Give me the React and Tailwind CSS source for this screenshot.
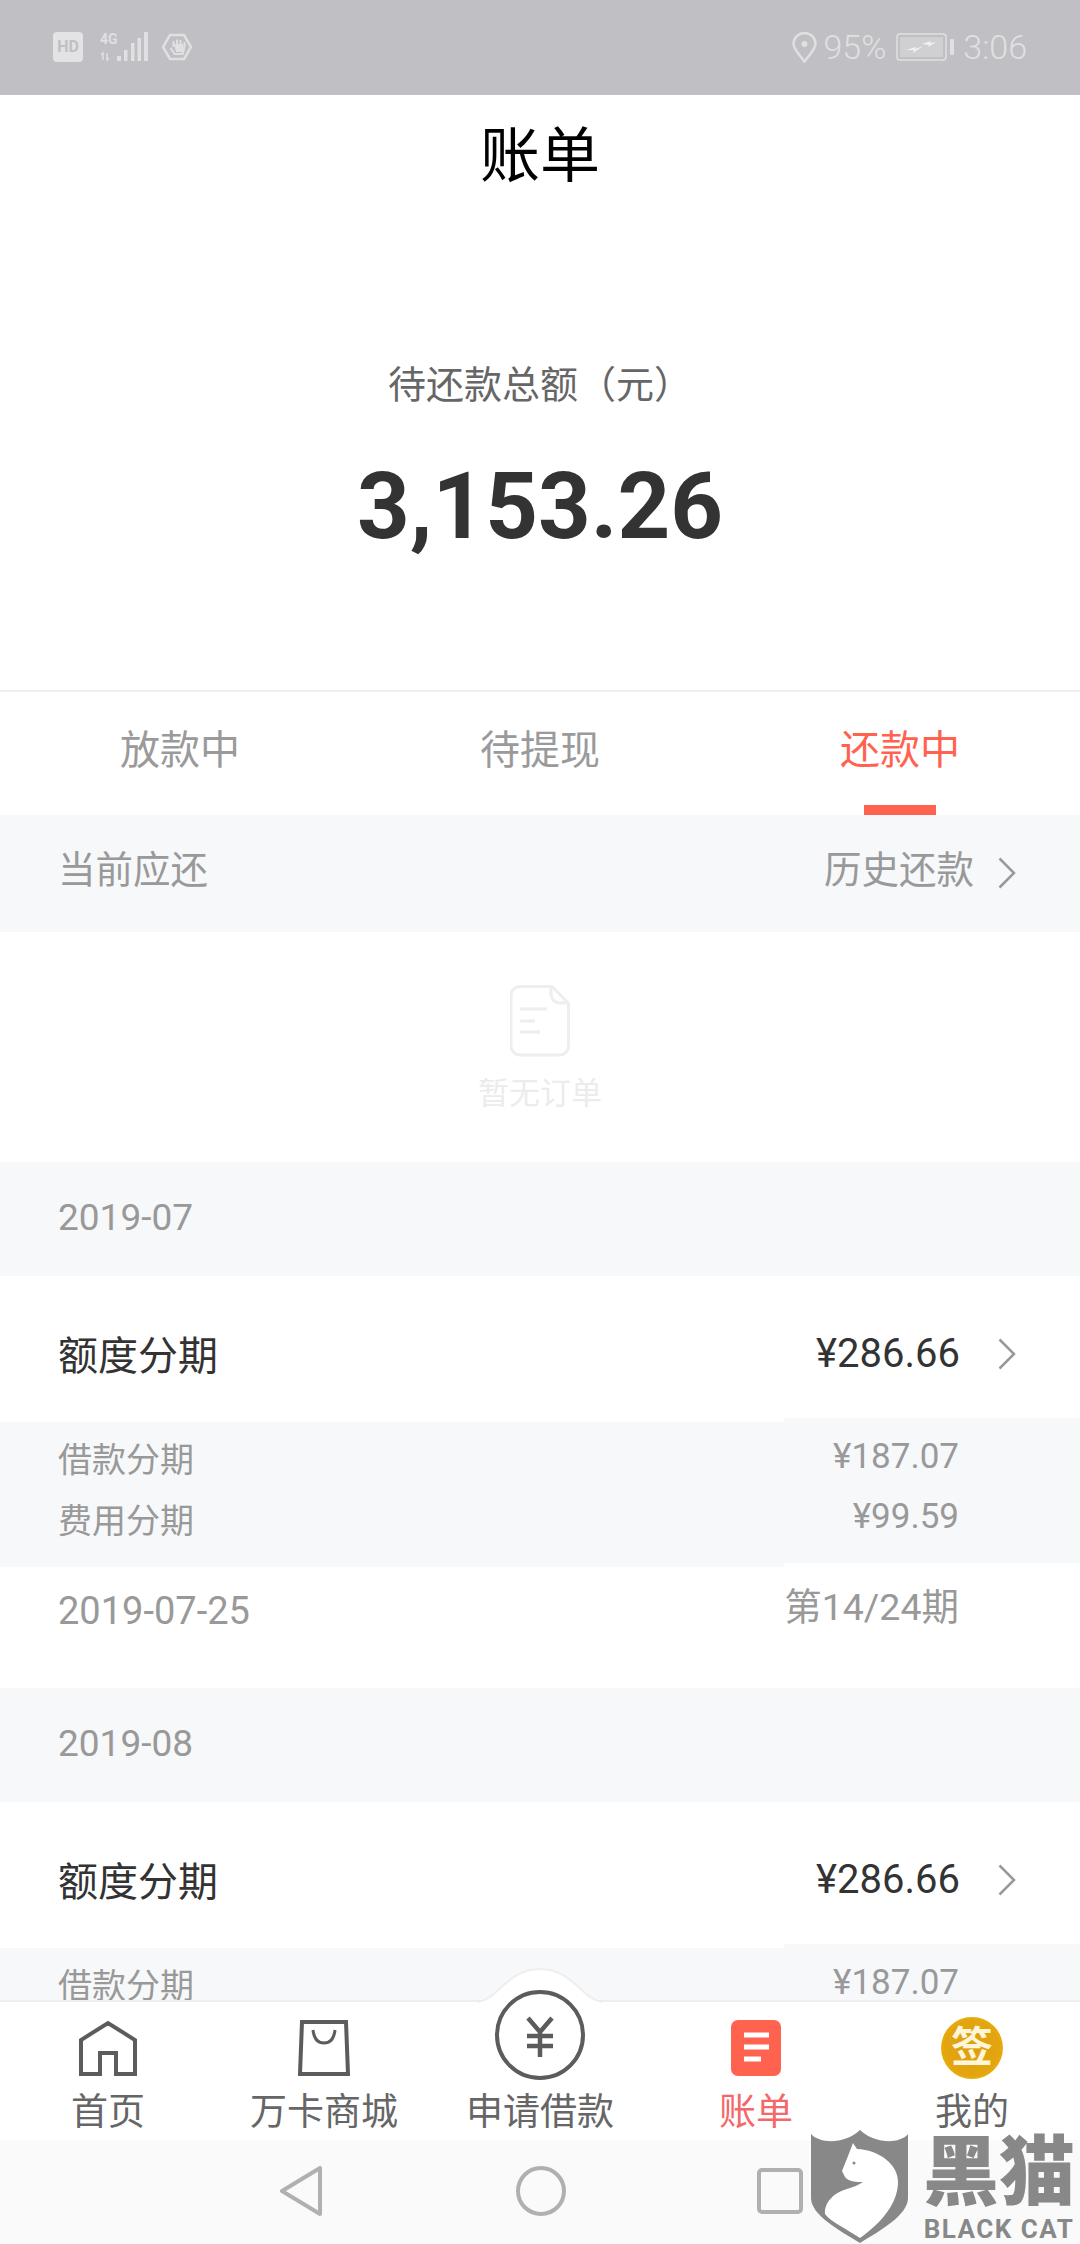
function Chevron({ className }) {
  return (
    <svg className={className} width="18" height="32" viewBox="0 0 18 32" fill="none" stroke="#999999" strokeWidth="2.5">
      <path d="M1.500 1.500L16 16 1.500 30.500" />
    </svg>
  );
}

function StatusBar() {
  return (
    <div className="relative z-20 flex h-[95px] shrink-0 items-center justify-between bg-[#c0bfc3] pl-[53px] pr-[53px] pb-[1px] text-[#e0e0e2]">
      <div className="flex items-center">
        <div className="flex h-[30px] w-[30px] items-center justify-center rounded-[4px] bg-[#e3e3e5] text-[16px] font-bold text-[#c0bfc3]">HD</div>
        {/* 신호 */}
        <svg className="ml-[17px]" width="50" height="30" viewBox="0 0 50 30" fill="currentColor">
          <text x="0" y="12" fontSize="14" fontWeight="700" fontFamily="Roboto">4G</text>
          <path d="M3 28v-7l-2 2M7 21v7l2-2" stroke="currentColor" strokeWidth="1.500" fill="none" />
          <rect x="17" y="24" width="4" height="5" />
          <rect x="24" y="18" width="3.500" height="11" />
          <rect x="31" y="11" width="3.500" height="18" />
          <rect x="37.500" y="6" width="3.500" height="23" />
          <rect x="44" y="0" width="4" height="29" />
        </svg>
        <svg className="ml-[11px]" width="32" height="28" viewBox="0 0 32 28" fill="none" stroke="currentColor" strokeWidth="2.500">
          <path d="M9 2h14l7 12-7 12H9L2 14z" />
          <path d="M9.500 15l4 6h8c1.500-3 2-7 2-12v4M12.500 14V8M16 14V6.500M19.500 14V7" strokeWidth="2" />
          <path d="M13 11h9v8h-7z" fill="currentColor" stroke="none" />
        </svg>
      </div>
      <div className="flex items-center">
        <svg width="25" height="31" viewBox="0 0 25 31" fill="none" stroke="currentColor" strokeWidth="2.500">
          <path d="M12.500 29.500C7 22 1.500 17 1.500 12a11 11 0 0 1 22 0c0 5-5.500 10-11 17.500z" />
          <circle cx="12.500" cy="12" r="3" fill="currentColor" stroke="none" />
        </svg>
        <span className="ml-[6px] text-[34px] leading-none font-light">95%</span>
        <svg className="ml-[10px]" width="58" height="28" viewBox="0 0 58 28" fill="none">
          <rect x="1" y="1" width="49" height="26" rx="3" stroke="currentColor" strokeWidth="1.500" />
          <rect x="4" y="4" width="43" height="20" fill="currentColor" opacity="0.5" />
          <path d="M10 17l10-3-1 2 8-3-10 7 1-3zM26 11l9-3-1 2 6-1-8 5 1-2z" fill="#f2f2f3" />
          <rect x="54" y="6" width="4" height="16" rx="1" fill="currentColor" />
        </svg>
        <span className="ml-[9px] text-[34px] leading-none font-light">3:06</span>
      </div>
    </div>
  );
}

function Tabs() {
  const tabs = ['放款中', '待提现', '还款中'];
  return (
    <div className="grid h-[125px] shrink-0 grid-cols-3 border-t-2 border-[#eeeeef] bg-white">
      {tabs.map((t, i) => (
        <div key={t} className="relative flex items-center justify-center pb-[6px]">
          <span className={i === 2 ? 'text-[40px] text-[#ff6350]' : 'text-[40px] text-[#9a9a9a]'}>{t}</span>
          {i === 2 && <div className="absolute bottom-0 left-1/2 h-[10px] w-[72px] -translate-x-1/2 bg-[#ff6350]" />}
        </div>
      ))}
    </div>
  );
}

// partial: 하단 탭에 가려지는 달은 보이는 줄만 그린다
function MonthBill({ month, date, period, partial }) {
  return (
    <div className="shrink-0">
      <div className="flex h-[114px] items-center bg-[#f7f8f9] pb-[2px] pl-[58px] text-[37px] text-[#999999]">{month}</div>
      <div className="grid grid-cols-[784px_296px]">
        <div>
          <div className="flex h-[146px] items-center pl-[58px] pt-[16px] text-[40px] text-[#333333]">额度分期</div>
          <div className="h-[145px] bg-[#f7f8f9] pl-[58px] pt-[8px] text-[34px] leading-[61px] text-[#999999]">
            <div>借款分期</div>
            {!partial && <div>费用分期</div>}
          </div>
          {!partial && <div className="flex h-[121px] items-center pb-[32px] pl-[58px] text-[38px] text-[#999999]">{date}</div>}
        </div>
        <div>
          <div className="flex h-[142px] items-center justify-end pr-[64px] pt-[14px] text-[40px] text-[#333333]">
            <span className="mr-[38px]">¥286.66</span>
            <Chevron />
          </div>
          <div className="h-[145px] bg-[#f7f8f9] pr-[121px] pt-[9px] text-right text-[35px] leading-[60px] text-[#999999]">
            <div>¥187.07</div>
            {!partial && <div>¥99.59</div>}
          </div>
          {!partial && <div className="flex h-[125px] justify-end whitespace-nowrap pr-[121px] pt-[22px] text-[37.500px] leading-[44px] text-[#999999]">{period}</div>}
        </div>
      </div>
    </div>
  );
}

function BottomNav() {
  return (
    <div className="relative z-10 grid h-[140px] shrink-0 grid-cols-5 border-t-2 border-[#eeeeee] bg-white text-[37px] leading-[40px] text-[#666666]">
      {/* 가운데 볼록한 부분 */}
      <svg className="absolute -top-[35px] left-[478px]" width="124" height="36" viewBox="0 0 124 36" fill="#ffffff" stroke="#eeeeee" strokeWidth="2">
        <path d="M0 35C20 32 30 2 62 2s42 30 62 33" />
      </svg>
      <NavItem label="首页">
        <svg width="58" height="56" viewBox="0 0 58 56" fill="none" stroke="#5c5c5c" strokeWidth="4">
          <path d="M2 54V20L29 3l27 17v34H37V33H21v21z" />
        </svg>
      </NavItem>
      <NavItem label="万卡商城">
        <svg width="52" height="56" viewBox="0 0 52 56" fill="none" stroke="#5c5c5c" strokeWidth="4">
          <path d="M4 2h44l2 52H2z" />
          <path d="M15 10c1 9 5 13 11 13s10-4 11-13" strokeWidth="3" />
        </svg>
      </NavItem>
      <div className="relative flex flex-col items-center justify-end pb-[7px]">
        <svg className="absolute -top-[12px]" width="90" height="90" viewBox="0 0 90 90" fill="none" stroke="#5c5c5c" strokeWidth="4">
          <circle cx="45" cy="45" r="43" />
          <path d="M33 28l12 14 12-14M32 46h26M32 56h26M45 42v25" strokeWidth="4.500" />
        </svg>
        <span>申请借款</span>
      </div>
      <NavItem label="账单" active>
        <svg width="50" height="56" viewBox="0 0 50 56">
          <rect width="50" height="56" rx="7" fill="#ff6350" />
          <path d="M13 15h25M13 27h25M13 39h17" stroke="#ffffff" strokeWidth="5" />
        </svg>
      </NavItem>
      <NavItem label="我的">
        <div className="flex h-[62px] w-[62px] items-center justify-center rounded-full bg-[radial-gradient(circle,#dd9f12_0%,#e3a50f_62%,#f7c800_100%)] text-[42px] leading-none font-bold text-[#fff6d8]">签</div>
      </NavItem>
    </div>
  );
}

function NavItem({ label, active, children }) {
  return (
    <div className={active ? 'flex flex-col items-center justify-end pb-[7px] text-[#f4686a]' : 'flex flex-col items-center justify-end pb-[7px]'}>
      <div className="mb-[17px] flex h-[56px] items-center">{children}</div>
      <span>{label}</span>
    </div>
  );
}

function Watermark() {
  return (
    <div className="absolute bottom-0 left-[811px] z-30 flex h-[114px] w-[269px] text-[#888888]">
      <svg width="97" height="114" viewBox="0 0 97 114">
        <path d="M0 4C10 15 36 13 49 0 62 13 88 15 97 4V68C97 85 70 100 49 113 28 100 0 85 0 68Z" fill="#888888" />
        <path d="M42 13l4 6C68 20 87 34 87 52 87 72 72 92 49 108 34 98 20 92 14 84 13 72 24 62 36 59 42 57 48 55 52 52 46 52 38 52 34 47L31 41 37 26Z" fill="#ffffff" />
        <circle cx="43" cy="33" r="1.500" fill="#888888" />
      </svg>
      <div className="ml-[15px] flex flex-col items-center">
        <span className="mt-[5px] text-[76px] leading-[76px] font-black whitespace-nowrap">黑猫</span>
        <span className="mt-[5px] text-[26px] leading-[26px] font-bold tracking-[1.500px] whitespace-nowrap">BLACK CAT</span>
      </div>
    </div>
  );
}

export default function App() {
  return (
    <div className="relative flex h-[2244px] w-[1080px] flex-col overflow-hidden bg-white font-[Roboto,'Noto_Sans_CJK_SC',sans-serif]">
      <StatusBar />

      <div className="flex min-h-0 flex-1 flex-col overflow-hidden">
        <div className="flex h-[118px] shrink-0 items-center justify-center pt-[6px] text-[60px] leading-none text-black">账单</div>

        {/* 총액 */}
        <div className="flex h-[477px] shrink-0 flex-col items-center bg-white">
          <div className="mt-[146px] text-[38px] leading-[52px] text-[#666666]">待还款总额（元）</div>
          <div className="mt-[43px] text-[92px] leading-[106px] font-bold text-[#333333]">3,153.26</div>
        </div>

        <Tabs />

        <div className="flex h-[117px] shrink-0 items-center justify-between bg-[#f7f8f9] pl-[58px] pr-[64px] pb-[6px] text-[37.500px] text-[#999999]">
          <span>当前应还</span>
          <span className="flex items-center">
            历史还款
            <Chevron className="ml-[24px] mt-[4px]" />
          </span>
        </div>

        {/* 빈 상태 */}
        <div className="flex h-[230px] shrink-0 flex-col items-center pt-[53px]">
          <svg width="60" height="72" viewBox="0 0 60 72" fill="none" stroke="#eeeeee" strokeWidth="3">
            <path d="M10 1.500h32l16.500 17V61a9 9 0 0 1-9 9H10a9 9 0 0 1-9-9V10.500a9 9 0 0 1 9-9z" />
            <path d="M41 2v7a9 9 0 0 0 9 9h8M10 24h27M10 36h15M10 47h20" />
          </svg>
          <span className="mt-[17px] text-[31px] leading-[40px] text-[#ececec]">暂无订单</span>
        </div>

        <MonthBill month="2019-07" date="2019-07-25" period="第14/24期" />
        <MonthBill month="2019-08" partial />
      </div>

      <BottomNav />

      {/* 시스템 내비게이션 */}
      <div className="flex h-[104px] shrink-0 items-center bg-[#fafafa] pb-[2px]">
        <svg className="ml-[279px]" width="44" height="50" viewBox="0 0 44 50" fill="none" stroke="#b0b0b0" strokeWidth="4">
          <path d="M41 2v46L3 25z" strokeLinejoin="round" />
        </svg>
        <svg className="ml-[193px]" width="50" height="50" viewBox="0 0 50 50" fill="none" stroke="#b0b0b0" strokeWidth="4">
          <circle cx="25" cy="25" r="23" />
        </svg>
        <svg className="ml-[191px]" width="46" height="46" viewBox="0 0 46 46" fill="none" stroke="#b0b0b0" strokeWidth="4">
          <rect x="2" y="2" width="42" height="42" rx="3" />
        </svg>
      </div>

      <Watermark />
    </div>
  );
}
